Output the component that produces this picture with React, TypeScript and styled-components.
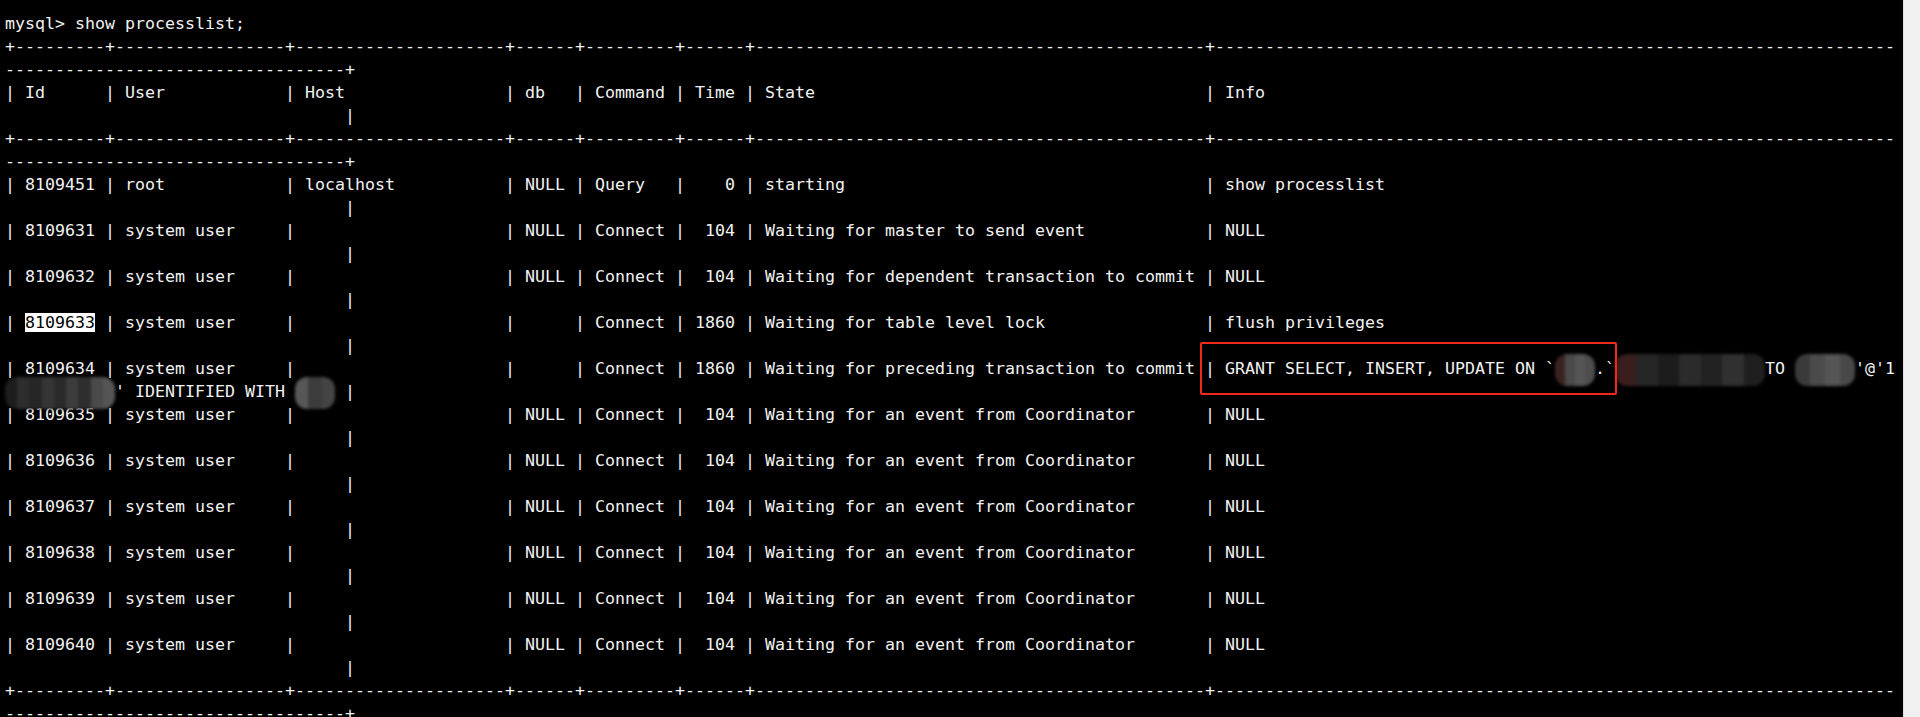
import styled, { createGlobalStyle } from "styled-components";
import type { ReactNode } from "react";

const GlobalStyle = createGlobalStyle`
  html, body {
    margin: 0;
    padding: 0;
    background: #000;
    height: 717px;
    overflow: hidden;
  }
  #root { height: 100%; }
`;

const Screen = styled.div`
  display: flex;
  width: 1920px;
  height: 717px;
  background: #000;
`;

const Terminal = styled.div`
  position: relative;
  flex: 1;
  overflow: hidden;
  padding: 12px 0 0 5px;
`;

const Output = styled.div`
  font-family: "DejaVu Sans Mono", "Liberation Mono", monospace;
  font-size: 16.61px;
  line-height: 23px;
  color: #f2f2f2;
  white-space: pre;
`;

const Line = styled.div`
  height: 23px;
`;

const Selected = styled.span`
  background: #fff;
  color: #000;
`;

// pixelated blur the author put over names / hosts
const Blur = styled.span<{ $w: number; $stops: string[] }>`
  display: inline-block;
  width: ${(p) => p.$w}ch;
  height: 32px;
  margin: -5px 0;
  vertical-align: middle;
  border-radius: 12px;
  filter: blur(1.5px);
  background: ${(p) =>
    "linear-gradient(90deg, " +
    p.$stops
      .map((c, i) => {
        const a = (i / p.$stops.length) * 100;
        const b = ((i + 1) / p.$stops.length) * 100;
        return `${c} ${a}%, ${c} ${b}%`;
      })
      .join(", ") +
    ")"};
`;

const Callout = styled.div`
  position: absolute;
  left: 1200px;
  top: 342px;
  width: 417px;
  height: 53px;
  box-sizing: border-box;
  border: 2px solid #f0281e;
  border-radius: 2px;
  pointer-events: none;
`;

const Scrollbar = styled.div`
  flex: none;
  width: 17px;
  box-sizing: border-box;
  background: #f0f0f0;
  border-left: 1px solid #e0e0e0;
`;

const COLS = 189;
const widths = [7, 15, 19, 4, 7, 4, 43, 100];
const rightAlign = [false, false, false, false, false, true, false, false];

const fmtRow = (cells: string[]) =>
  "| " +
  cells
    .map((c, i) => (rightAlign[i] ? c.padStart(widths[i]) : c.padEnd(widths[i])))
    .join(" | ") +
  " |";

const border = "+" + widths.map((w) => "-".repeat(w + 2)).join("+") + "+";

const BLOB = "▒";
const grantInfo =
  "GRANT SELECT, INSERT, UPDATE ON `" +
  BLOB.repeat(4) +
  ".`" +
  BLOB.repeat(15) +
  "TO " +
  BLOB.repeat(6) +
  "'@'1" +
  BLOB.repeat(11) +
  "' IDENTIFIED WITH " +
  BLOB.repeat(4);

const blobTones = [
  ["#3b2222", "#4a4a4a", "#555555", "#4d4d4d"],
  ["#3a1e1e", "#262626", "#1c1c1c", "#2b2b2b", "#222222", "#303030", "#1f1f1f"],
  ["#3a3a3a", "#4b4b4b", "#555555", "#484848"],
  ["#1d1d1d", "#2d2d2d", "#262626", "#353535", "#2a2a2a", "#3c3c3c", "#2e2e2e", "#4a4a4a", "#555555"],
  ["#575757", "#3c3c3c", "#444444"],
];

const sysUser = (id: string, db: string, time: string, state: string, info: string) => [
  id, "system user", "", db, "Connect", time, state, info,
];

const rows = [
  ["8109451", "root", "localhost", "NULL", "Query", "0", "starting", "show processlist"],
  sysUser("8109631", "NULL", "104", "Waiting for master to send event", "NULL"),
  sysUser("8109632", "NULL", "104", "Waiting for dependent transaction to commit", "NULL"),
  sysUser("8109633", "", "1860", "Waiting for table level lock", "flush privileges"),
  sysUser("8109634", "", "1860", "Waiting for preceding transaction to commit", grantInfo),
  ...["8109635", "8109636", "8109637", "8109638", "8109639", "8109640"].map((id) =>
    sysUser(id, "NULL", "104", "Waiting for an event from Coordinator", "NULL")
  ),
];

// the terminal hard-wraps every table line at COLS
const wrap = (s: string) => [s.slice(0, COLS), s.slice(COLS)];

const header = fmtRow(["Id", "User", "Host", "db", "Command", "Time", "State", "Info"]);
const lines: string[] = [
  "mysql> show processlist;",
  ...wrap(border),
  ...wrap(header),
  ...wrap(border),
  ...rows.flatMap((r) => wrap(fmtRow(r))),
  ...wrap(border),
];

let blobIndex = 0;
function renderLine(text: string): ReactNode {
  if (text.startsWith("| 8109633")) {
    return (
      <>
        {"| "}
        <Selected>8109633</Selected>
        {text.slice(9)}
      </>
    );
  }
  if (!text.includes(BLOB)) return text;
  const parts = text.split(/(▒+)/);
  return parts.map((p, i) =>
    p.startsWith(BLOB) ? (
      <Blur key={i} $w={p.length} $stops={blobTones[blobIndex++ % blobTones.length]} />
    ) : (
      p
    )
  );
}

function App() {
  blobIndex = 0;
  return (
    <Screen>
      <GlobalStyle />
      <Terminal>
        <Output>
          {lines.map((l, i) => (
            <Line key={i}>{renderLine(l)}</Line>
          ))}
        </Output>
        <Callout />
      </Terminal>
      <Scrollbar />
    </Screen>
  );
}

export default App;
